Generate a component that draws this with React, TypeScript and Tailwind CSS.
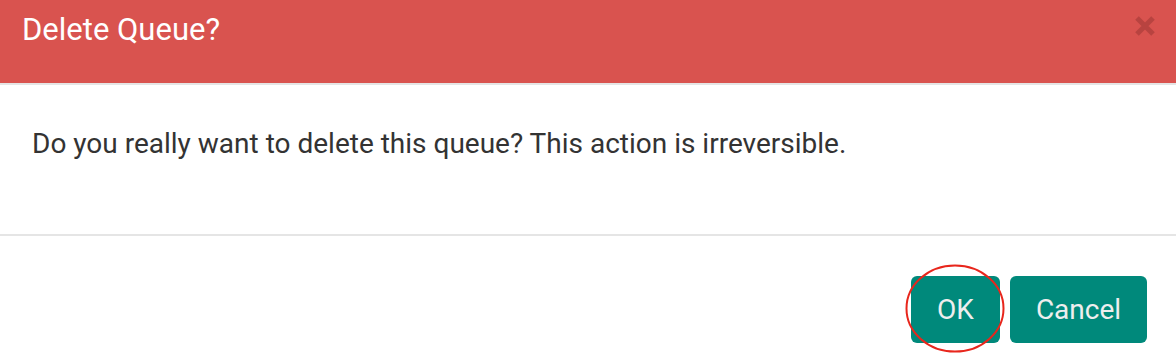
import React from "react";

export default function App() {
  return (
    <div className="w-[1176px] h-[358px] bg-white overflow-hidden flex flex-col" style={{ fontFamily: "Roboto, 'Noto Sans', sans-serif" }}>
      <div className="h-[85px] shrink-0 bg-[#d9534f] border-b-2 border-[#e5e5e5] flex items-start justify-between pl-[22px] pr-[20px]">
        <h4 className="text-white text-[31px] font-normal leading-none mt-[14px]">Delete Queue?</h4>
        <button className="mt-[15px] w-[22px] h-[22px] flex items-center justify-center">
          <svg width="22" height="22" viewBox="0 0 22 22">
            <path d="M3 3 L19 19 M19 3 L3 19" stroke="#b0403d" strokeWidth="5" strokeLinecap="butt" opacity="0.8" />
          </svg>
        </button>
      </div>
      <div className="h-[151px] shrink-0 border-b-2 border-[#e5e5e5] flex items-start pl-[32px] pt-[45px]">
        <p className="text-[#333333] text-[28px] leading-none">Do you really want to delete this queue? This action is irreversible.</p>
      </div>
      <div className="flex justify-end gap-[10px] pr-[29px] pt-[40px]">
        <div className="relative">
          <button className="w-[89px] h-[67px] rounded-[6px] bg-[#00897b] text-[#eeeeee] text-[28px] leading-none flex items-center justify-center">OK</button>
          <svg className="absolute left-[-6px] top-[-12px] pointer-events-none" width="100" height="90" viewBox="0 0 100 90">
            <ellipse cx="50" cy="44.5" rx="48.5" ry="43" fill="none" stroke="#e8261c" strokeWidth="2" />
          </svg>
        </div>
        <button className="w-[137px] h-[67px] rounded-[6px] bg-[#00897b] text-[#eeeeee] text-[28px] leading-none flex items-center justify-center">Cancel</button>
      </div>
    </div>
  );
}
